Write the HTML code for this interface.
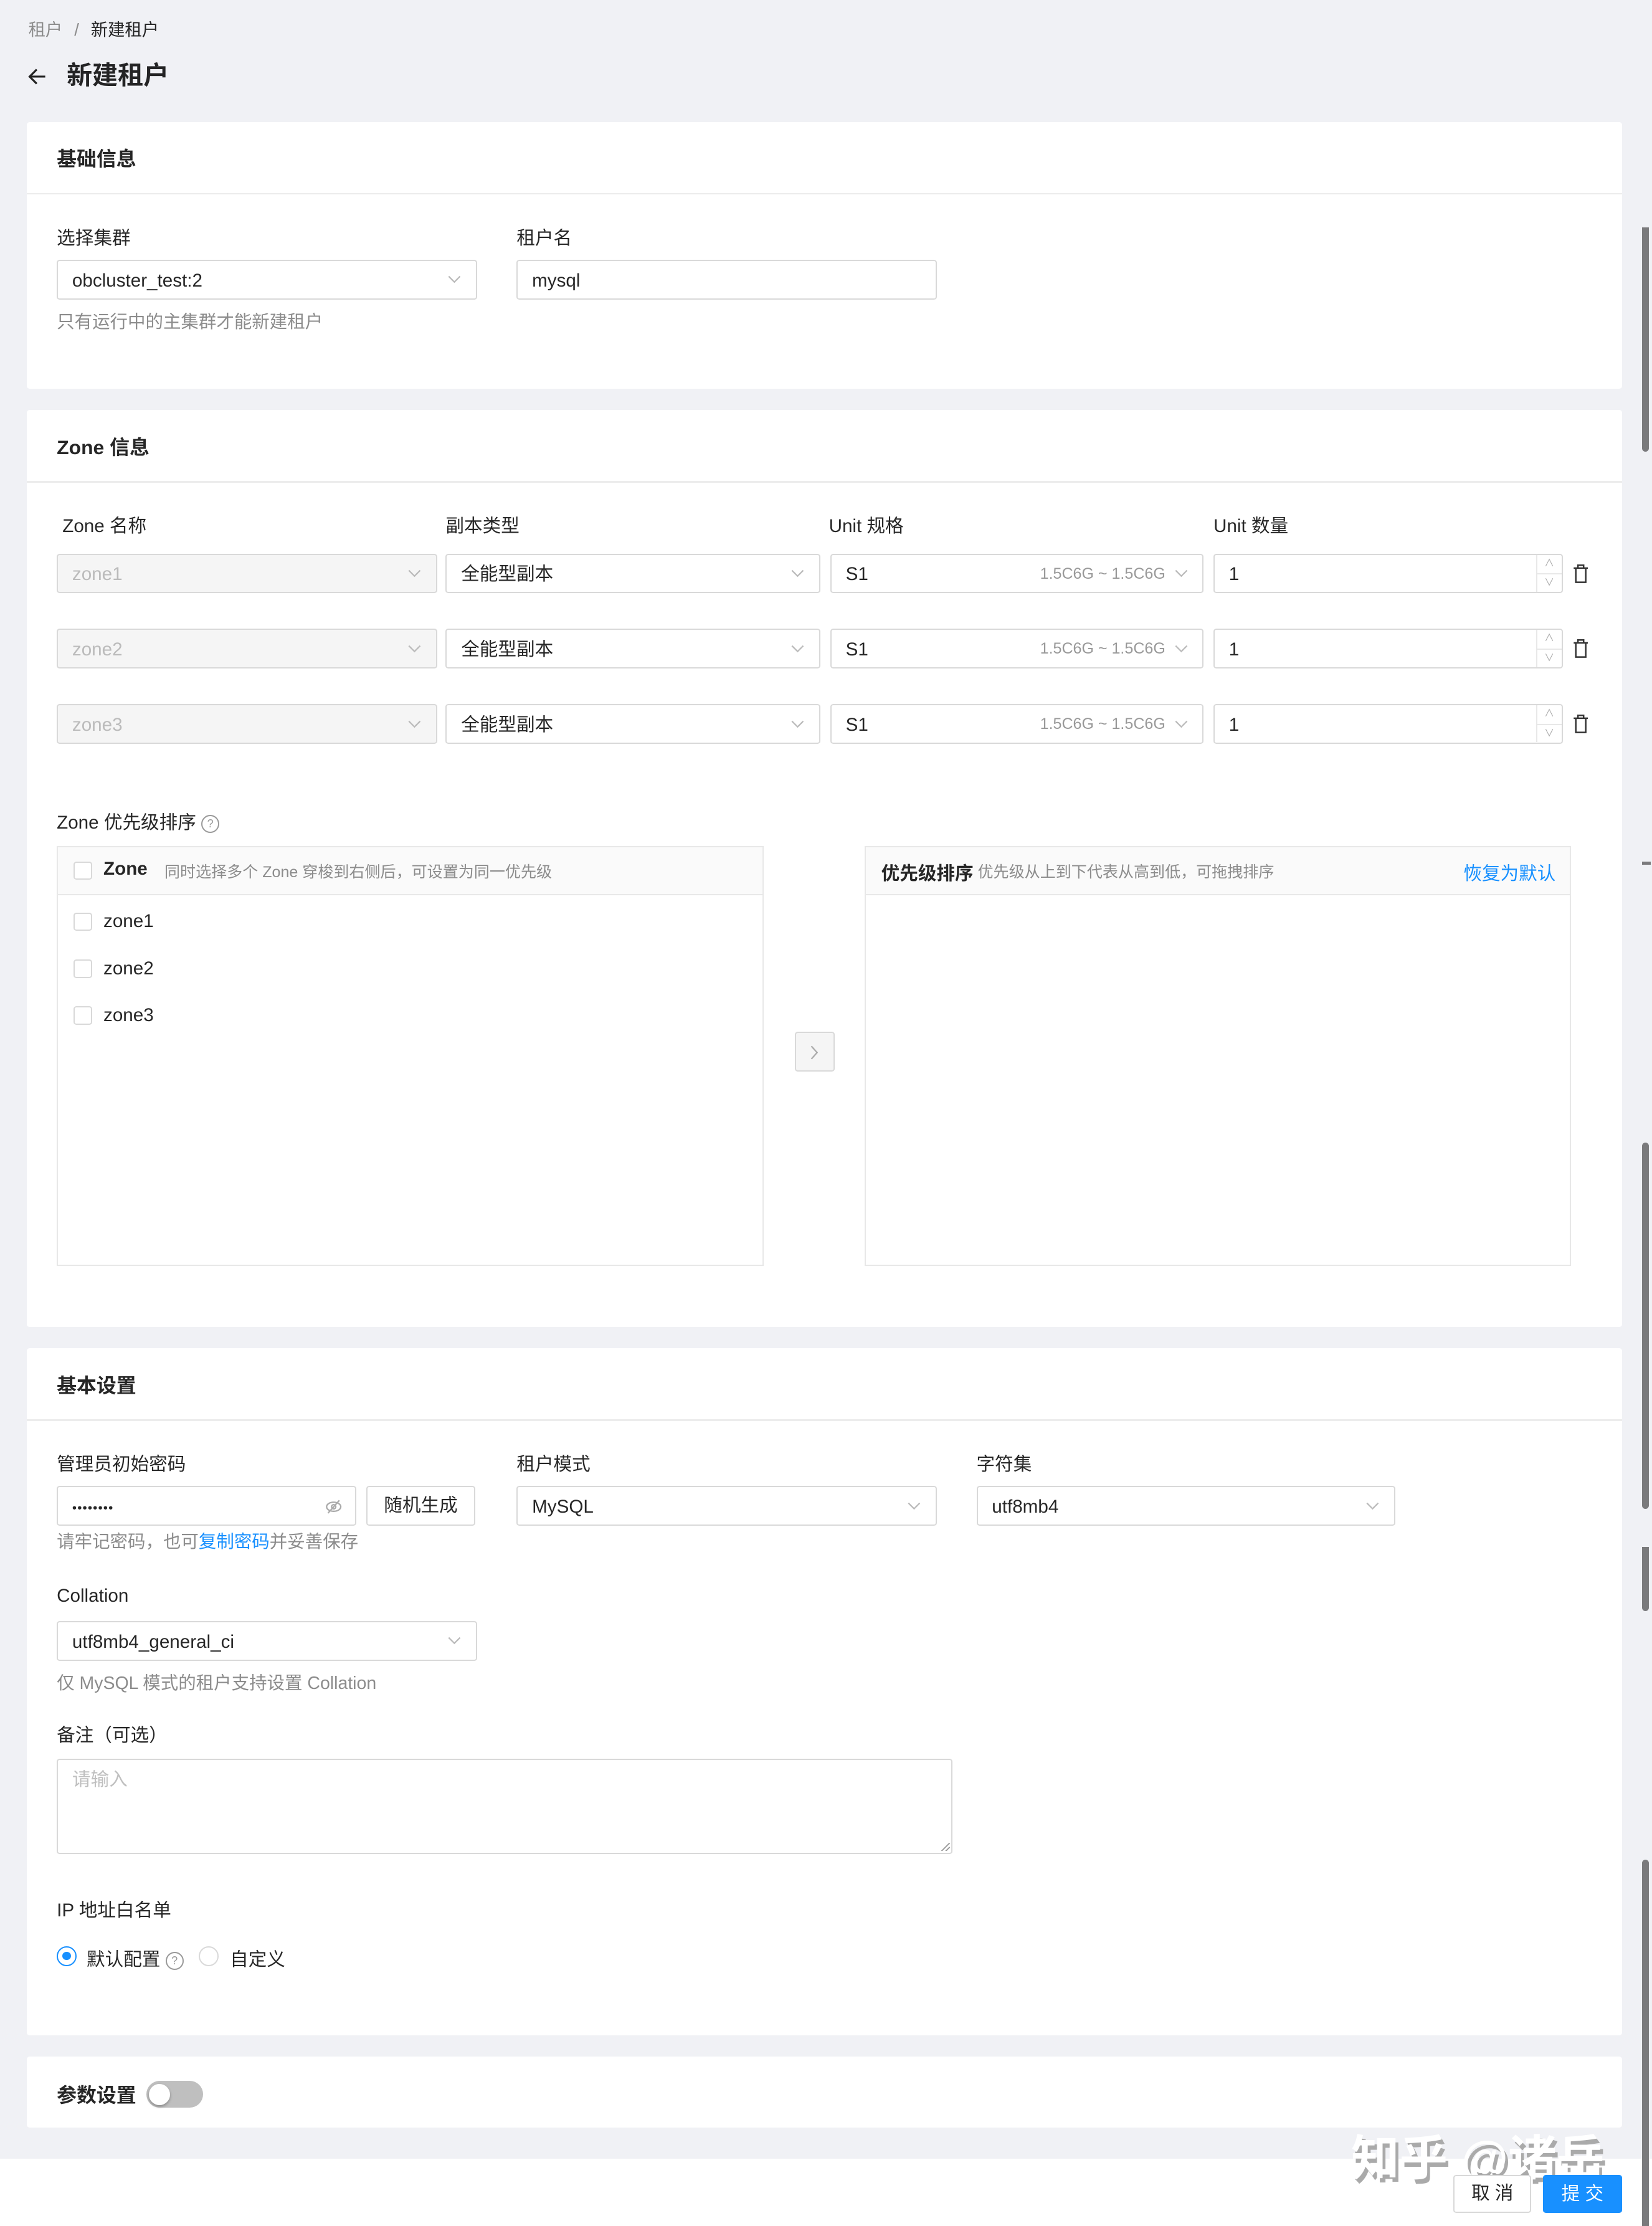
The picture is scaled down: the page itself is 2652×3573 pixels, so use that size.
<!DOCTYPE html>
<html><head><meta charset="utf-8">
<style>
html,body{margin:0;padding:0;}
body{width:2652px;height:3573px;overflow:hidden;background:#f0f1f5;}
#w{zoom:2.2784;width:1164px;height:1568px;position:relative;font-family:"Liberation Sans","Noto Sans CJK SC",sans-serif;color:rgba(0,0,0,.85);font-size:13px;}
.a{position:absolute;white-space:nowrap;}
.card{position:absolute;left:19px;width:1124px;background:#fff;border-radius:2px;}
.hd{position:absolute;left:21px;font-size:14px;font-weight:bold;}
.dv{position:absolute;left:0;right:0;height:1px;background:#ececec;}
.in{position:absolute;height:26px;border:1px solid #d9d9d9;border-radius:2px;background:#fff;box-sizing:border-box;}
.in .t{position:absolute;left:10px;top:5px;font-size:13px;line-height:16px;}
.dis{background:#f5f5f5;}
.dis .t{color:#bbb;}
.chev{position:absolute;right:10px;top:8px;width:10px;height:8px;}
.lbl{font-size:13px;}
.help{color:#8c8c8c;font-size:12.5px;}
.cb{position:absolute;width:13px;height:13px;border:1px solid #d9d9d9;border-radius:2px;background:#fff;box-sizing:border-box;}
.sb{position:absolute;left:1157px;width:5px;background:#7a7a7c;border-radius:0 0 3px 3px;}
</style></head><body><div id="w">
<div class="a" style="left:20px;top:11px;font-size:12px;color:#8c8c8c">租户 <span style="margin:0 5px">/</span> <span style="color:rgba(0,0,0,.85)">新建租户</span></div>
<svg class="a" style="left:19px;top:47px" width="14" height="14" viewBox="0 0 14 14"><path d="M13 7H2M7 2L2 7l5 5" stroke="#222" stroke-width="1.4" fill="none"/></svg>
<div class="a" style="left:47px;top:42px;font-size:18px;font-weight:bold;line-height:22px">新建租户</div>

<!-- card 1 -->
<div class="card" style="top:86px;height:188px">
 <div class="hd" style="top:15px">基础信息</div>
 <div class="dv" style="top:50px"></div>
 <div class="a lbl" style="left:21px;top:71px">选择集群</div>
 <div class="in" style="left:21px;top:97px;width:296px;height:28px"><div class="t" style="top:6px">obcluster_test:2</div><svg class="chev" style="top:9px" viewBox="0 0 10 8"><path d="M1 2l4 4 4-4" stroke="#bbb" fill="none"/></svg></div>
 <div class="a help" style="left:21px;top:131px">只有运行中的主集群才能新建租户</div>
 <div class="a lbl" style="left:345px;top:71px">租户名</div>
 <div class="in" style="left:345px;top:97px;width:296px;height:28px"><div class="t" style="top:6px">mysql</div></div>
</div>

<!-- card 2 -->
<div class="card" style="top:289px;height:646px">
 <div class="hd" style="top:15px">Zone 信息</div>
 <div class="dv" style="top:50px"></div>
 <div class="a lbl" style="left:25px;top:71px">Zone 名称</div>
 <div class="a lbl" style="left:295px;top:71px">副本类型</div>
 <div class="a lbl" style="left:565px;top:71px">Unit 规格</div>
 <div class="a lbl" style="left:836px;top:71px">Unit 数量</div>
 <!-- rows -->
 <div class="in dis" style="left:21px;top:101px;width:268px;height:28px"><div class="t" style="top:6px">zone1</div><svg class="chev" style="top:9px" viewBox="0 0 10 8"><path d="M1 2l4 4 4-4" stroke="#bbb" fill="none"/></svg></div>
 <div class="in" style="left:295px;top:101px;width:264px;height:28px"><div class="t" style="top:6px">全能型副本</div><svg class="chev" style="top:9px" viewBox="0 0 10 8"><path d="M1 2l4 4 4-4" stroke="#bbb" fill="none"/></svg></div>
 <div class="in" style="left:566px;top:101px;width:263px;height:28px"><div class="t" style="top:6px">S1</div><div class="a" style="right:26px;top:7px;font-size:11px;color:#999">1.5C6G ~ 1.5C6G</div><svg class="chev" style="top:9px" viewBox="0 0 10 8"><path d="M1 2l4 4 4-4" stroke="#bbb" fill="none"/></svg></div>
 <div class="in" style="left:836px;top:101px;width:246px;height:28px"><div class="t" style="top:6px">1</div><div class="a" style="right:0;top:0;width:17px;height:26px;border-left:1px solid #e8e8e8"><div style="height:13px;border-bottom:1px solid #e8e8e8;font-size:7px;color:#aaa;text-align:center;line-height:12px">∧</div><div style="font-size:7px;color:#aaa;text-align:center;line-height:12px">∨</div></div></div>
 <svg class="a" style="left:1089px;top:108px" width="12" height="14" viewBox="0 0 12 14"><path d="M1 3h10M4 3V1h4v2M2.5 3v10h7V3" stroke="#333" stroke-width="1.1" fill="none"/></svg>

 <div class="in dis" style="left:21px;top:154px;width:268px;height:28px"><div class="t" style="top:6px">zone2</div><svg class="chev" style="top:9px" viewBox="0 0 10 8"><path d="M1 2l4 4 4-4" stroke="#bbb" fill="none"/></svg></div>
 <div class="in" style="left:295px;top:154px;width:264px;height:28px"><div class="t" style="top:6px">全能型副本</div><svg class="chev" style="top:9px" viewBox="0 0 10 8"><path d="M1 2l4 4 4-4" stroke="#bbb" fill="none"/></svg></div>
 <div class="in" style="left:566px;top:154px;width:263px;height:28px"><div class="t" style="top:6px">S1</div><div class="a" style="right:26px;top:7px;font-size:11px;color:#999">1.5C6G ~ 1.5C6G</div><svg class="chev" style="top:9px" viewBox="0 0 10 8"><path d="M1 2l4 4 4-4" stroke="#bbb" fill="none"/></svg></div>
 <div class="in" style="left:836px;top:154px;width:246px;height:28px"><div class="t" style="top:6px">1</div><div class="a" style="right:0;top:0;width:17px;height:26px;border-left:1px solid #e8e8e8"><div style="height:13px;border-bottom:1px solid #e8e8e8;font-size:7px;color:#aaa;text-align:center;line-height:12px">∧</div><div style="font-size:7px;color:#aaa;text-align:center;line-height:12px">∨</div></div></div>
 <svg class="a" style="left:1089px;top:161px" width="12" height="14" viewBox="0 0 12 14"><path d="M1 3h10M4 3V1h4v2M2.5 3v10h7V3" stroke="#333" stroke-width="1.1" fill="none"/></svg>

 <div class="in dis" style="left:21px;top:207px;width:268px;height:28px"><div class="t" style="top:6px">zone3</div><svg class="chev" style="top:9px" viewBox="0 0 10 8"><path d="M1 2l4 4 4-4" stroke="#bbb" fill="none"/></svg></div>
 <div class="in" style="left:295px;top:207px;width:264px;height:28px"><div class="t" style="top:6px">全能型副本</div><svg class="chev" style="top:9px" viewBox="0 0 10 8"><path d="M1 2l4 4 4-4" stroke="#bbb" fill="none"/></svg></div>
 <div class="in" style="left:566px;top:207px;width:263px;height:28px"><div class="t" style="top:6px">S1</div><div class="a" style="right:26px;top:7px;font-size:11px;color:#999">1.5C6G ~ 1.5C6G</div><svg class="chev" style="top:9px" viewBox="0 0 10 8"><path d="M1 2l4 4 4-4" stroke="#bbb" fill="none"/></svg></div>
 <div class="in" style="left:836px;top:207px;width:246px;height:28px"><div class="t" style="top:6px">1</div><div class="a" style="right:0;top:0;width:17px;height:26px;border-left:1px solid #e8e8e8"><div style="height:13px;border-bottom:1px solid #e8e8e8;font-size:7px;color:#aaa;text-align:center;line-height:12px">∧</div><div style="font-size:7px;color:#aaa;text-align:center;line-height:12px">∨</div></div></div>
 <svg class="a" style="left:1089px;top:214px" width="12" height="14" viewBox="0 0 12 14"><path d="M1 3h10M4 3V1h4v2M2.5 3v10h7V3" stroke="#333" stroke-width="1.1" fill="none"/></svg>

 <div class="a lbl" style="left:21px;top:280px">Zone 优先级排序 <span style="display:inline-block;width:11px;height:11px;border:1px solid #999;border-radius:50%;font-size:8px;line-height:11px;text-align:center;color:#999;vertical-align:1px">?</span></div>
 <!-- left transfer -->
 <div class="a" style="left:21px;top:307px;width:498px;height:296px;border:1px solid #e8e8e8;box-sizing:border-box">
  <div style="height:33px;background:#fafafa;border-bottom:1px solid #e8e8e8"></div>
  <div class="cb" style="left:11px;top:10px"></div>
  <div class="a" style="left:32px;top:8px;font-weight:bold">Zone</div>
  <div class="a" style="left:75px;top:9px;font-size:11px;color:#8c8c8c">同时选择多个 Zone 穿梭到右侧后，可设置为同一优先级</div>
  <div class="cb" style="left:11px;top:46px"></div><div class="a" style="left:32px;top:45px">zone1</div>
  <div class="cb" style="left:11px;top:79px"></div><div class="a" style="left:32px;top:78px">zone2</div>
  <div class="cb" style="left:11px;top:112px"></div><div class="a" style="left:32px;top:111px">zone3</div>
 </div>
 <div class="a" style="left:541px;top:438px;width:28px;height:28px;border:1px solid #d9d9d9;background:#f5f5f5;border-radius:2px;box-sizing:border-box"><svg style="position:absolute;left:9px;top:8px" width="8" height="11" viewBox="0 0 8 11"><path d="M2 1l4 4.5L2 10" stroke="#aaa" fill="none"/></svg></div>
 <!-- right transfer -->
 <div class="a" style="left:590px;top:307px;width:498px;height:296px;border:1px solid #e8e8e8;box-sizing:border-box">
  <div style="height:33px;background:#fafafa;border-bottom:1px solid #e8e8e8"></div>
  <div class="a" style="left:11px;top:8px;font-weight:bold">优先级排序</div>
  <div class="a" style="left:79px;top:9px;font-size:11px;color:#8c8c8c">优先级从上到下代表从高到低，可拖拽排序</div>
  <div class="a" style="right:10px;top:8px;color:#1890ff">恢复为默认</div>
 </div>
</div>

<!-- card 3 -->
<div class="card" style="top:950px;height:484px">
 <div class="hd" style="top:15px">基本设置</div>
 <div class="dv" style="top:50px"></div>
 <div class="a lbl" style="left:21px;top:71px">管理员初始密码</div>
 <div class="in" style="left:21px;top:97px;width:211px;height:28px"><div class="t" style="top:7px;font-size:9px;letter-spacing:0.5px">••••••••</div><svg class="a" style="right:9px;top:8px" width="12" height="11" viewBox="0 0 12 11"><ellipse cx="6" cy="5.5" rx="5" ry="3.2" stroke="#aaa" fill="none"/><circle cx="6" cy="5.5" r="1.5" stroke="#aaa" fill="none"/><path d="M10 1L2 10" stroke="#aaa"/></svg></div>
 <div class="in" style="left:239px;top:97px;width:77px;height:28px;text-align:center"><div style="line-height:26px">随机生成</div></div>
 <div class="a help" style="left:21px;top:126px">请牢记密码，也可<span style="color:#1890ff">复制密码</span>并妥善保存</div>
 <div class="a lbl" style="left:345px;top:71px">租户模式</div>
 <div class="in" style="left:345px;top:97px;width:296px;height:28px"><div class="t" style="top:6px">MySQL</div><svg class="chev" style="top:9px" viewBox="0 0 10 8"><path d="M1 2l4 4 4-4" stroke="#bbb" fill="none"/></svg></div>
 <div class="a lbl" style="left:669px;top:71px">字符集</div>
 <div class="in" style="left:669px;top:97px;width:295px;height:28px"><div class="t" style="top:6px">utf8mb4</div><svg class="chev" style="top:9px" viewBox="0 0 10 8"><path d="M1 2l4 4 4-4" stroke="#bbb" fill="none"/></svg></div>
 <div class="a lbl" style="left:21px;top:167px">Collation</div>
 <div class="in" style="left:21px;top:192px;width:296px;height:28px"><div class="t" style="top:6px">utf8mb4_general_ci</div><svg class="chev" style="top:9px" viewBox="0 0 10 8"><path d="M1 2l4 4 4-4" stroke="#bbb" fill="none"/></svg></div>
 <div class="a help" style="left:21px;top:226px">仅 MySQL 模式的租户支持设置 Collation</div>
 <div class="a lbl" style="left:21px;top:262px">备注（可选）</div>
 <div class="in" style="left:21px;top:289px;width:631px;height:67px"><div class="t" style="top:6px;color:#bfbfbf">请输入</div><svg class="a" style="right:1px;bottom:1px" width="6" height="6" viewBox="0 0 6 6"><path d="M6 0L0 6M6 3L3 6" stroke="#999" stroke-width=".8"/></svg></div>
 <div class="a lbl" style="left:21px;top:385px">IP 地址白名单</div>
 <div class="a" style="left:21px;top:421px;width:14px;height:14px;border:1px solid #1890ff;border-radius:50%;box-sizing:border-box"><div style="margin:3px;width:6px;height:6px;border-radius:50%;background:#1890ff"></div></div>
 <div class="a" style="left:42px;top:420px">默认配置 <span style="display:inline-block;width:11px;height:11px;border:1px solid #999;border-radius:50%;font-size:8px;line-height:11px;text-align:center;color:#999;vertical-align:1px">?</span></div>
 <div class="a" style="left:121px;top:421px;width:14px;height:14px;border:1px solid #d9d9d9;border-radius:50%;box-sizing:border-box"></div>
 <div class="a" style="left:143px;top:420px">自定义</div>
</div>

<!-- card 4 -->
<div class="card" style="top:1449px;height:50px">
 <div class="a" style="left:21px;top:16px;font-size:14px;font-weight:bold">参数设置</div>
 <div class="a" style="left:84px;top:17px;width:40px;height:19px;border-radius:10px;background:#bfbfbf"><div style="position:absolute;left:2px;top:2px;width:15px;height:15px;border-radius:50%;background:#fff;box-shadow:0 1px 2px rgba(0,0,0,.3)"></div></div>
</div>

<!-- bottom bar -->
<div class="a" style="left:0;top:1521px;width:1164px;height:47px;background:#fff"></div>
<div class="a" style="left:952px;top:1500px;font-size:34px;font-weight:bold;color:#fff;text-shadow:2px 3px 0 #aaa;line-height:42px">知乎 @诸岳</div>
<div class="a" style="left:1024px;top:1532px;width:55px;height:27px;border:1px solid #d9d9d9;border-radius:2px;box-sizing:border-box;text-align:center;line-height:25px;background:#fff">取 消</div>
<div class="a" style="left:1087px;top:1532px;width:56px;height:27px;border-radius:2px;background:#1890ff;color:#fff;text-align:center;line-height:27px">提 交</div>

<!-- scrollbar thumbs -->
<div class="sb" style="top:160px;height:158px"></div>
<div class="a" style="left:1157px;top:607px;width:6px;height:2px;background:#7a7a7c"></div>
<div class="sb" style="top:805px;height:258px;border-radius:3px"></div>
<div class="sb" style="top:1090px;height:45px"></div>
<div class="sb" style="top:1310px;height:258px;border-radius:3px 3px 0 0"></div>
</div></body></html>
